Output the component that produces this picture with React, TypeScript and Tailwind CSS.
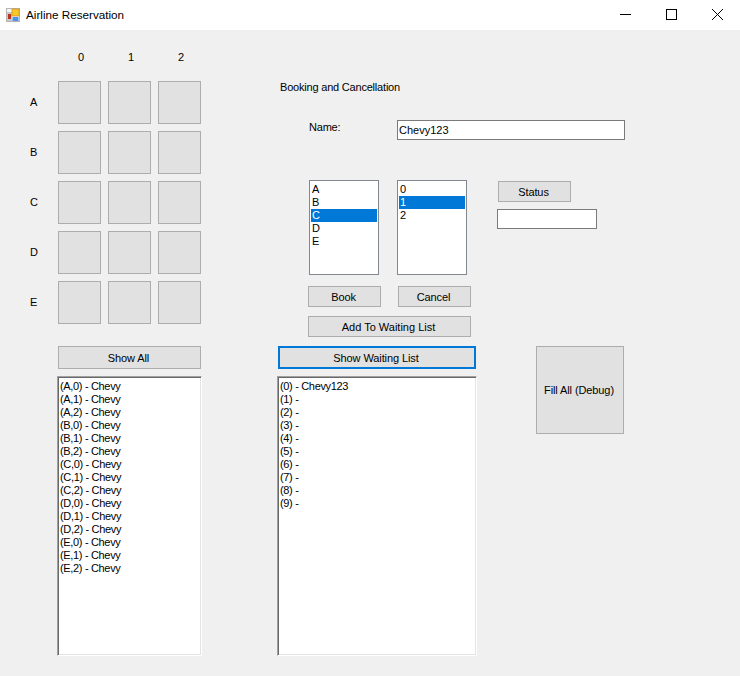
const font = { fontFamily: '"Liberation Sans", Arial, sans-serif' };

const seatRows = ["A", "B", "C", "D", "E"];
const seatCols = ["0", "1", "2"];

const allSeats = seatRows.flatMap((r) => seatCols.map((c) => `(${r},${c}) - Chevy`));
const waiting = ["(0) - Chevy123", "(1) -", "(2) -", "(3) -", "(4) -", "(5) -", "(6) -", "(7) -", "(8) -", "(9) -"];

function Btn({ label, className }: { label: string; className: string }) {
  return (
    <button className={`flex items-center justify-center pt-[1px] pr-[2px] tracking-[-0.1px] bg-[#e1e1e1] border border-[#adadad] text-black ${className}`}>
      {label}
    </button>
  );
}

function PickList({ items, selected }: { items: string[]; selected: string }) {
  return (
    <div className="w-[70px] h-[95px] bg-white border border-[#828790] px-[1px] pt-[2px] leading-[13px]">
      {items.map((item) => (
        <div key={item} className={item === selected ? "h-[13px] pl-[1px] bg-[#0078d7] text-white" : "h-[13px] pl-[1px]"}>
          {item}
        </div>
      ))}
    </div>
  );
}

function OutputList({ items, className }: { items: string[]; className: string }) {
  return (
    <div className={`h-[280px] bg-white border border-t-[#a0a0a0] border-l-[#a0a0a0] border-r-white border-b-white shadow-[inset_1px_1px_0_#696969,inset_-1px_-1px_0_#e3e3e3] pl-[2px] pt-[3px] leading-[13px] tracking-[-0.33px] ${className}`}>
      {items.map((item) => (
        <div key={item} className="h-[13px]">{item}</div>
      ))}
    </div>
  );
}

export default function App() {
  return (
    <div className="w-[740px] h-[676px] overflow-hidden flex flex-col bg-[#f0f0f0] text-[11px] tracking-[-0.2px] text-black" style={font}>
      <div className="h-[30px] bg-white flex items-center shrink-0">
        <svg width="14" height="14" viewBox="0 0 14 14" className="ml-[6px]">
          <rect x="0.5" y="0.5" width="13" height="13" fill="#f6f6f6" stroke="#b5b5b5" />
          <rect x="1" y="4" width="5" height="9" fill="#c9c9c9" />
          <rect x="2" y="6" width="3" height="5" fill="#b8321f" />
          <rect x="6" y="1" width="7" height="7" fill="#f7c92b" stroke="#d08a12" strokeWidth="0.7" />
          <rect x="6.5" y="9" width="6" height="4" fill="#4f93e6" />
        </svg>
        <span className="ml-[6px] text-[11.7px] tracking-normal">Airline Reservation</span>
        <div className="ml-auto flex items-center">
          <svg width="46" height="30" viewBox="0 0 46 30">
            <path d="M18 14.5h11" stroke="#000" fill="none" />
          </svg>
          <svg width="46" height="30" viewBox="0 0 46 30">
            <rect x="18.5" y="9.5" width="10" height="10" stroke="#000" fill="none" />
          </svg>
          <svg width="46" height="30" viewBox="0 0 46 30">
            <path d="M18 9l11 11M29 9L18 20" stroke="#000" fill="none" />
          </svg>
        </div>
      </div>

      <div className="flex flex-1">
        <div className="w-[202px] ml-[25px] shrink-0 flex flex-col">
          <div className="ml-[33px] mt-[20px] h-[14px] flex">
            {seatCols.map((c) => (
              <div key={c} className="w-[50px] pl-[20px] leading-[14px]">{c}</div>
            ))}
          </div>
          <div className="mt-[17px] flex flex-col gap-[7px]">
            {seatRows.map((r) => (
              <div key={r} className="flex items-center h-[43px]">
                <div className="w-[33px] pl-[5px]">{r}</div>
                <div className="flex gap-[7px]">
                  {seatCols.map((c) => (
                    <div key={c} className="w-[43px] h-[43px] bg-[#e1e1e1] border border-[#adadad]" />
                  ))}
                </div>
              </div>
            ))}
          </div>
          <Btn label="Show All" className="ml-[33px] mt-[22px] w-[143px] h-[23px]" />
          <OutputList items={allSeats} className="ml-[32px] mt-[7px] w-[145px]" />
        </div>

        <div className="ml-[50px] flex flex-col">
          <div className="ml-[3px] mt-[50px] h-[14px] leading-[14px]">Booking and Cancellation</div>
          <div className="mt-[26px] flex">
            <div className="ml-[32px] w-[88px] leading-[14px]">Name:</div>
            <div className="w-[228px] h-[20px] bg-white border border-[#7a7a7a] pl-[1px] leading-[18px] tracking-normal">Chevy123</div>
          </div>
          <div className="mt-[40px] flex ml-[32px]">
            <PickList items={seatRows} selected="C" />
            <div className="ml-[18px]">
              <PickList items={seatCols} selected="1" />
            </div>
            <div className="ml-[30px] flex flex-col">
              <Btn label="Status" className="ml-[1px] mt-[1px] w-[73px] h-[21px]" />
              <div className="mt-[7px] w-[100px] h-[20px] bg-white border border-[#7a7a7a]" />
            </div>
          </div>
          <div className="mt-[11px] ml-[31px] flex gap-[17px]">
            <Btn label="Book" className="w-[73px] h-[21px]" />
            <Btn label="Cancel" className="w-[73px] h-[21px]" />
          </div>
          <Btn label="Add To Waiting List" className="mt-[9px] ml-[31px] w-[163px] h-[21px] !tracking-normal" />
          <div className="mt-[9px] flex items-start">
            <div className="flex flex-col">
              <Btn label="Show Waiting List" className="ml-[1px] w-[198px] h-[23px] !border-2 !border-[#0078d7]" />
              <OutputList items={waiting} className="mt-[7px] w-[200px]" />
            </div>
            <Btn label="Fill All (Debug)" className="ml-[59px] w-[88px] h-[88px]" />
          </div>
        </div>
      </div>
    </div>
  );
}
